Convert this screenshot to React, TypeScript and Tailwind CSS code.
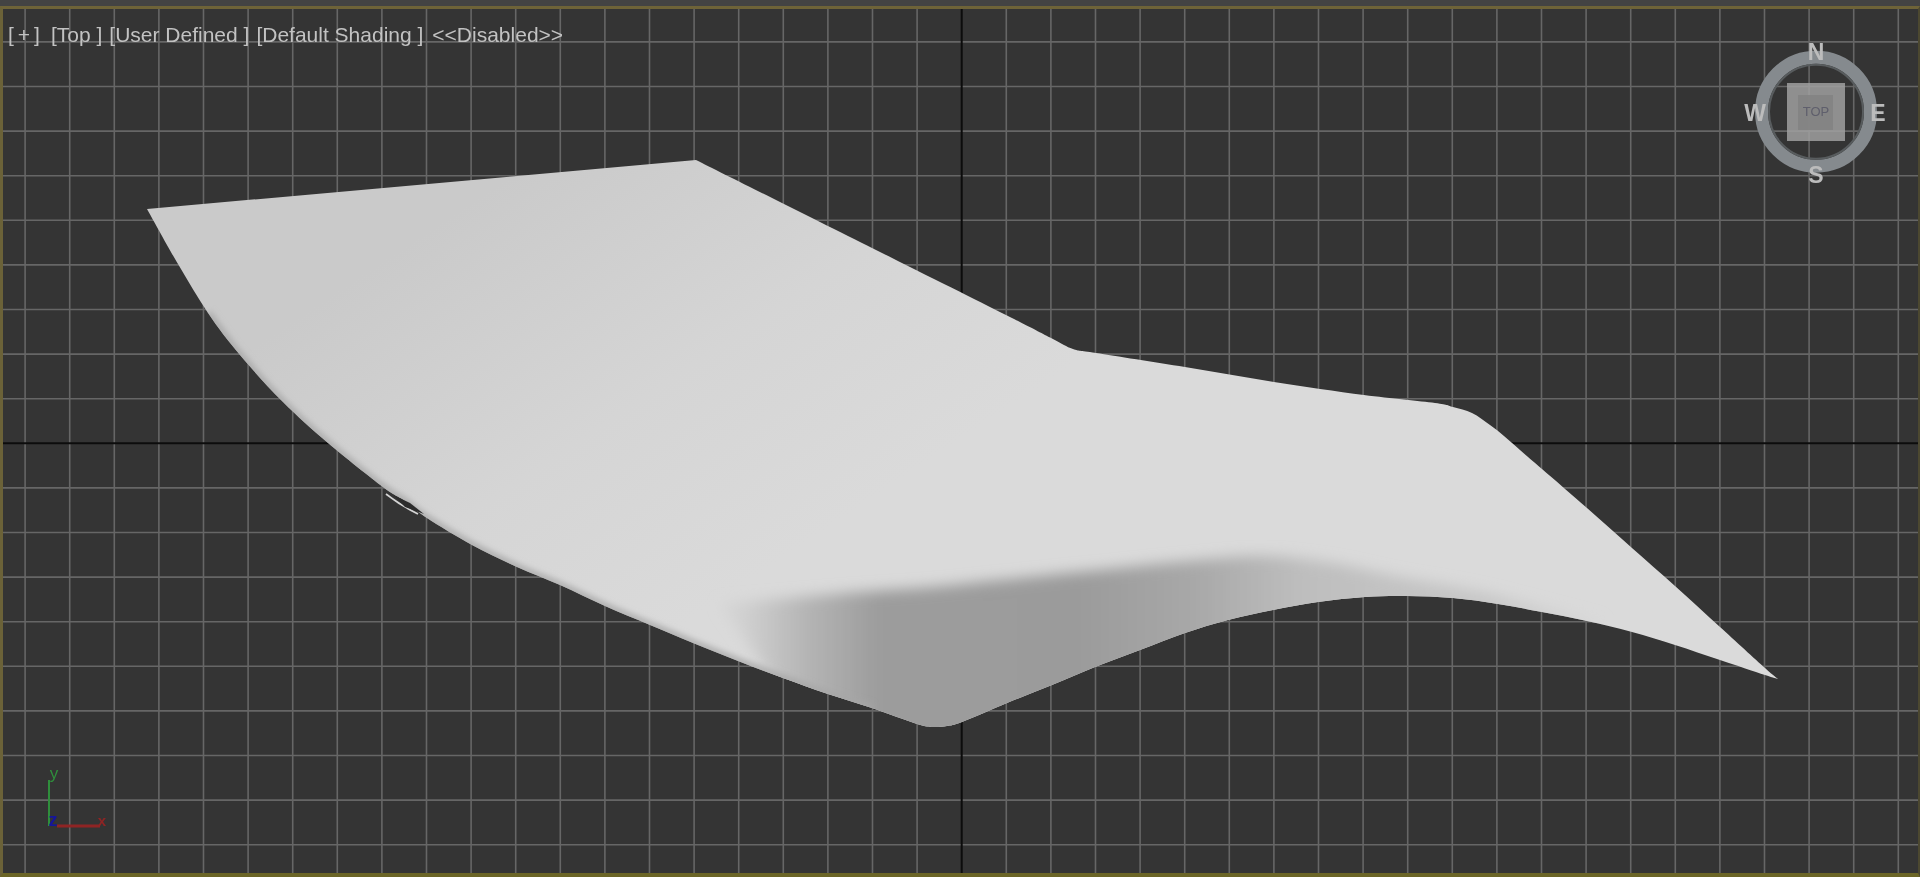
const ORIGIN_X = 961.7;
const ORIGIN_Y = 443.3;
const STEP = 44.6;

const gridLines = (origin: number, min: number, max: number) => {
  const lines: number[] = [];
  for (let k = -30; k <= 30; k++) {
    const p = origin + k * STEP;
    if (k !== 0 && p > min && p < max) lines.push(p);
  }
  return lines;
};

// catmull-rom through the measured outline points
type Pt = [number, number];
const smooth = (pts: Pt[]) => {
  let d = "";
  for (let i = 0; i < pts.length - 1; i++) {
    const p0 = pts[i - 1] || pts[i];
    const p1 = pts[i];
    const p2 = pts[i + 1];
    const p3 = pts[i + 2] || p2;
    const c1x = p1[0] + (p2[0] - p0[0]) / 6;
    const c1y = p1[1] + (p2[1] - p0[1]) / 6;
    const c2x = p2[0] - (p3[0] - p1[0]) / 6;
    const c2y = p2[1] - (p3[1] - p1[1]) / 6;
    d += ` C${c1x.toFixed(1)} ${c1y.toFixed(1)} ${c2x.toFixed(1)} ${c2y.toFixed(1)} ${p2[0]} ${p2[1]}`;
  }
  return d;
};

const upperEdge: Pt[] = [
  [696, 160], [873, 248.5], [1006, 315], [1052, 338.5], [1073, 349],
  [1096, 353], [1185, 367], [1274, 382], [1364, 395], [1435, 403], [1453, 407], [1472, 413], [1490, 425],
  [1504, 436], [1520, 450], [1542, 469], [1587, 508], [1632, 548], [1675, 586], [1720, 627], [1765, 668], [1778, 679],
];
const lowerEdge: Pt[] = [
  [1778, 679], [1765, 675], [1720, 660], [1675, 645], [1632, 632], [1587, 621], [1542, 612], [1498, 604],
  [1453, 598], [1407, 596], [1365, 597], [1318, 602], [1273, 610], [1228, 620], [1185, 633], [1140, 650],
  [1095, 667], [1052, 685], [1007, 703], [962, 722], [947, 726], [933, 727], [917, 724], [872, 708],
  [828, 694], [783, 678], [738, 661], [693, 643], [650, 625], [605, 606], [560, 585], [517, 567],
  [472, 545], [427, 518], [405, 501], [383, 487], [328, 443], [283, 402], [240, 355], [208, 313], [178, 264], [147, 209],
];
const shape = `M147 209 L696 160${smooth(upperEdge)}${smooth(lowerEdge)} Z`;
const rimEdge = `M208 313${smooth(lowerEdge.slice(23).reverse().slice(2))}`;
const crease: Pt[] = [
  [720, 604], [800, 597], [860, 592], [933, 587], [1000, 580], [1100, 570], [1200, 560], [1267, 556],
  [1333, 563], [1400, 577], [1483, 592], [1600, 622],
];
const fold = `M830 760 L720 604${smooth(crease)} L1600 760 Z`;

const Viewport = () => (
  <svg viewBox="3 9 1915 864" className="block w-full h-full">
    <defs>
      <linearGradient id="sheet" gradientUnits="userSpaceOnUse" x1="520" y1="170" x2="780" y2="560">
        <stop offset="0" stopColor="#cacaca" />
        <stop offset="0.55" stopColor="#d5d5d5" />
        <stop offset="1" stopColor="#dadada" />
      </linearGradient>
      <linearGradient id="under" gradientUnits="userSpaceOnUse" x1="700" y1="0" x2="1600" y2="0">
        <stop offset="0" stopColor="#dadada" />
        <stop offset="0.05" stopColor="#d0d0d0" />
        <stop offset="0.12" stopColor="#b4b4b4" />
        <stop offset="0.2" stopColor="#9c9c9c" />
        <stop offset="0.42" stopColor="#9b9b9b" />
        <stop offset="0.55" stopColor="#a8a8a8" />
        <stop offset="0.67" stopColor="#bebebe" />
        <stop offset="0.88" stopColor="#c8c8c8" />
        <stop offset="1" stopColor="#d8d8d8" />
      </linearGradient>
      <clipPath id="sheetClip">
        <path d={shape} />
      </clipPath>
      <filter id="soft" x="-10%" y="-30%" width="120%" height="160%">
        <feGaussianBlur stdDeviation="7" />
      </filter>
      <filter id="softer" x="-10%" y="-30%" width="120%" height="160%">
        <feGaussianBlur stdDeviation="3" />
      </filter>
    </defs>

    <g className="blur-[0.4px]">
      {gridLines(ORIGIN_X, 3, 1918).map((x) => (
        <line key={x} x1={x} x2={x} y1="9" y2="873" stroke="#666666" strokeWidth="1.6" />
      ))}
      {gridLines(ORIGIN_Y, 9, 873).map((y) => (
        <line key={y} x1="3" x2="1918" y1={y} y2={y} stroke="#666666" strokeWidth="1.6" />
      ))}
      <line x1={ORIGIN_X} x2={ORIGIN_X} y1="9" y2="873" stroke="#0c0c0c" strokeWidth="2" />
      <line x1="3" x2="1918" y1={ORIGIN_Y} y2={ORIGIN_Y} stroke="#0c0c0c" strokeWidth="2" />

      {/* surface */}
      <path d="M386 494 Q400 505 418 514" fill="none" stroke="#d4d4d4" strokeWidth="1.8" />
      <path d={shape} fill="url(#sheet)" />
      <g clipPath="url(#sheetClip)">
        <path d={fold} fill="url(#under)" filter="url(#soft)" />
        <path d={rimEdge} fill="none" stroke="#a6a6a6" strokeWidth="6" filter="url(#softer)" />
      </g>
      <path d="M393 495 L410 503 L424 514 L405 507 Z" fill="#2c2c2c" />
    </g>

    {/* view cube */}
    <g className="blur-[0.5px]">
      <circle cx="1816" cy="111.7" r="54.5" fill="none" stroke="#858a8e" strokeWidth="13" />
      <circle cx="1816" cy="111.7" r="47" fill="none" stroke="#585c5e" strokeWidth="2" />
      <rect x="1787" y="83" width="58" height="58" fill="#a0a0a0" fillOpacity="0.85" />
      <rect x="1798" y="95" width="35" height="35" fill="#828282" fillOpacity="0.85" />
      <text x="1816" y="116" textAnchor="middle" fontSize="13" fill="#5f5f6c" className="font-['Liberation_Sans',sans-serif]">TOP</text>
      <g fill="#bcbcbc" fontSize="23" fontWeight="700" textAnchor="middle" className="font-['Liberation_Sans',sans-serif]">
        <text x="1816" y="60">N</text>
        <text x="1816" y="183">S</text>
        <text x="1755" y="121">W</text>
        <text x="1878" y="121">E</text>
      </g>
    </g>

    {/* world axis tripod */}
    <g className="blur-[0.4px] font-['Liberation_Sans',sans-serif]">
      <line x1="49" x2="49" y1="780" y2="826" stroke="#2f8f3c" strokeWidth="2" />
      <line x1="57" x2="100" y1="826" y2="826" stroke="#8f2424" strokeWidth="3" />
      <text x="54" y="779" fontSize="17" textAnchor="middle" fill="#2f8f3c">y</text>
      <text x="53" y="826" fontSize="18" fontWeight="700" textAnchor="middle" fill="#15159c">z</text>
      <text x="102" y="826" fontSize="15" fontWeight="700" textAnchor="middle" fill="#8f2424">x</text>
    </g>
  </svg>
);

export default function App() {
  return (
    <div className="w-[1920px] h-[877px] overflow-hidden bg-[#434343] pt-[6px] flex flex-col">
      <div className="relative flex-1 min-h-0 bg-[#343434] border-t-[3px] border-l-[3px] border-r-2 border-b-4 border-t-[#6e6338] border-l-[#6b6238] border-r-[#4c4830] border-b-[#6b6526]">
        <Viewport />
        <div className="absolute left-[5px] top-[14px] flex gap-[7px] text-[21px] leading-6 text-[#c2c2c2] blur-[0.4px] font-['Liberation_Sans',sans-serif]">
          <span className="tracking-[4px]">[+]</span>
          <span>[Top ]</span>
          <span>[User Defined ]</span>
          <span>[Default Shading ]</span>
          <span className="ml-[2px]">&lt;&lt;Disabled&gt;&gt;</span>
        </div>
      </div>
    </div>
  );
}
